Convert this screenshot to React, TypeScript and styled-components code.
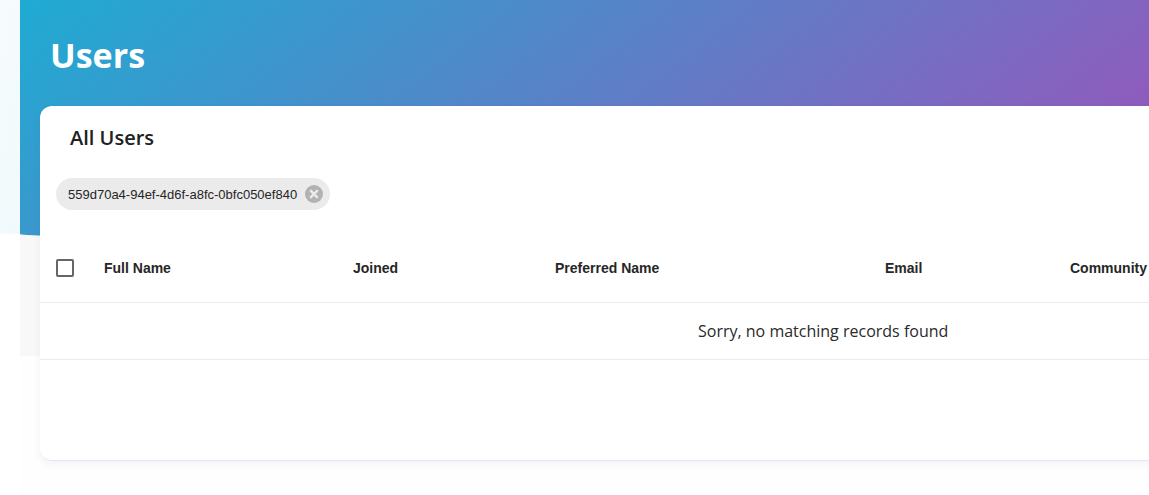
import styled, { createGlobalStyle } from "styled-components"

const GlobalStyle = createGlobalStyle`
  html, body {
    margin: 0;
    padding: 0;
    background: #fff;
    overflow: hidden;
  }
`

const Page = styled.div`
  display: flex;
  width: 1149px;
  height: 495px;
  overflow: hidden;
  font-family: "Open Sans", sans-serif;
`

const Sidebar = styled.aside`
  flex: 0 0 20px;
  height: 495px;
  background: #fff;
`

const SidebarTint = styled.div`
  height: 234px;
  background: linear-gradient(100deg, #f7fcfd 0%, #f0f9fc 100%);
  border-bottom-left-radius: 40px 2px;
`

const Main = styled.main`
  position: relative;
  flex: 1;
  min-width: 0;
  background: linear-gradient(to bottom, #f8f8f8 0, #f8f8f8 356px, #fefefe 356px, #fefefe 100%);
`

const Banner = styled.header`
  height: 236px;
  padding: 33px 0 0 30px;
  box-sizing: border-box;
  background: linear-gradient(142deg, #1fabd3 0%, #905bbd 89%);
  border-bottom-left-radius: 60px 2px;
`

const PageTitle = styled.h1`
  margin: 0;
  font-size: 34px;
  line-height: 44px;
  font-weight: 700;
  color: #fff;
`

const Card = styled.section`
  position: absolute;
  top: 106px;
  left: 20px;
  width: 1140px;
  height: 355px;
  background: #fff;
  border-radius: 12px 0 0 12px;
  border-bottom: 1px solid #e9e6f4;
  box-sizing: border-box;
  box-shadow: 0 3px 8px rgba(60, 50, 110, 0.06);
`

const CardTitle = styled.h2`
  margin: 0;
  padding: 18px 0 0 30px;
  font-size: 20px;
  line-height: 28px;
  font-weight: 600;
  color: #212121;
`

const ChipRow = styled.div`
  display: flex;
  padding: 26px 0 0 16px;
`

const Chip = styled.div`
  display: flex;
  align-items: center;
  gap: 8px;
  height: 32px;
  padding: 0 7px 0 12px;
  border-radius: 16px;
  background: #ebebeb;
  font-family: "Liberation Sans", Arial, sans-serif;
  font-size: 13px;
  color: #262626;
`

const ChipClose = styled.svg`
  display: block;
  width: 18px;
  height: 18px;
`

const HeaderRow = styled.div`
  display: flex;
  align-items: center;
  height: 68px;
  margin-top: 24px;
  border-bottom: 1px solid #ece9f6;
`

const HeaderCell = styled.div<{ $width: number }>`
  flex: 0 0 ${(p) => p.$width}px;
  font-family: "Liberation Sans", Arial, sans-serif;
  font-size: 14px;
  font-weight: 700;
  color: #262626;
`

const CheckBox = styled.span`
  flex: 0 0 auto;
  width: 14px;
  height: 14px;
  margin: 0 30px 0 16px;
  border: 2px solid #666;
  border-radius: 2px;
`

const EmptyRow = styled.div`
  height: 56px;
  padding-left: 658px;
  border-bottom: 1px solid #ece9f6;
  font-size: 16px;
  line-height: 57px;
  color: #2a2a2a;
  white-space: nowrap;
`

const columns = [
  { label: "Full Name", width: 249 },
  { label: "Joined", width: 202 },
  { label: "Preferred Name", width: 330 },
  { label: "Email", width: 185 },
  { label: "Community", width: 120 },
]

const App = () => {
  return (
    <>
      <GlobalStyle />
      <Page>
        <Sidebar>
          <SidebarTint />
        </Sidebar>
        <Main>
          <Banner>
            <PageTitle>Users</PageTitle>
          </Banner>
          <Card>
            <CardTitle>All Users</CardTitle>
            <ChipRow>
              <Chip>
                559d70a4-94ef-4d6f-a8fc-0bfc050ef840
                <ChipClose viewBox="0 0 18 18">
                  <circle cx="9" cy="9" r="9" fill="#b2b2b2" />
                  <path d="M5.2 5.2l7.6 7.6M12.8 5.2l-7.6 7.6" stroke="#ebebeb" strokeWidth="2.4" fill="none" />
                </ChipClose>
              </Chip>
            </ChipRow>
            <HeaderRow>
              <CheckBox />
              {columns.map((c) => (
                <HeaderCell key={c.label} $width={c.width}>
                  {c.label}
                </HeaderCell>
              ))}
            </HeaderRow>
            <EmptyRow>Sorry, no matching records found</EmptyRow>
          </Card>
        </Main>
      </Page>
    </>
  )
}

export default App
